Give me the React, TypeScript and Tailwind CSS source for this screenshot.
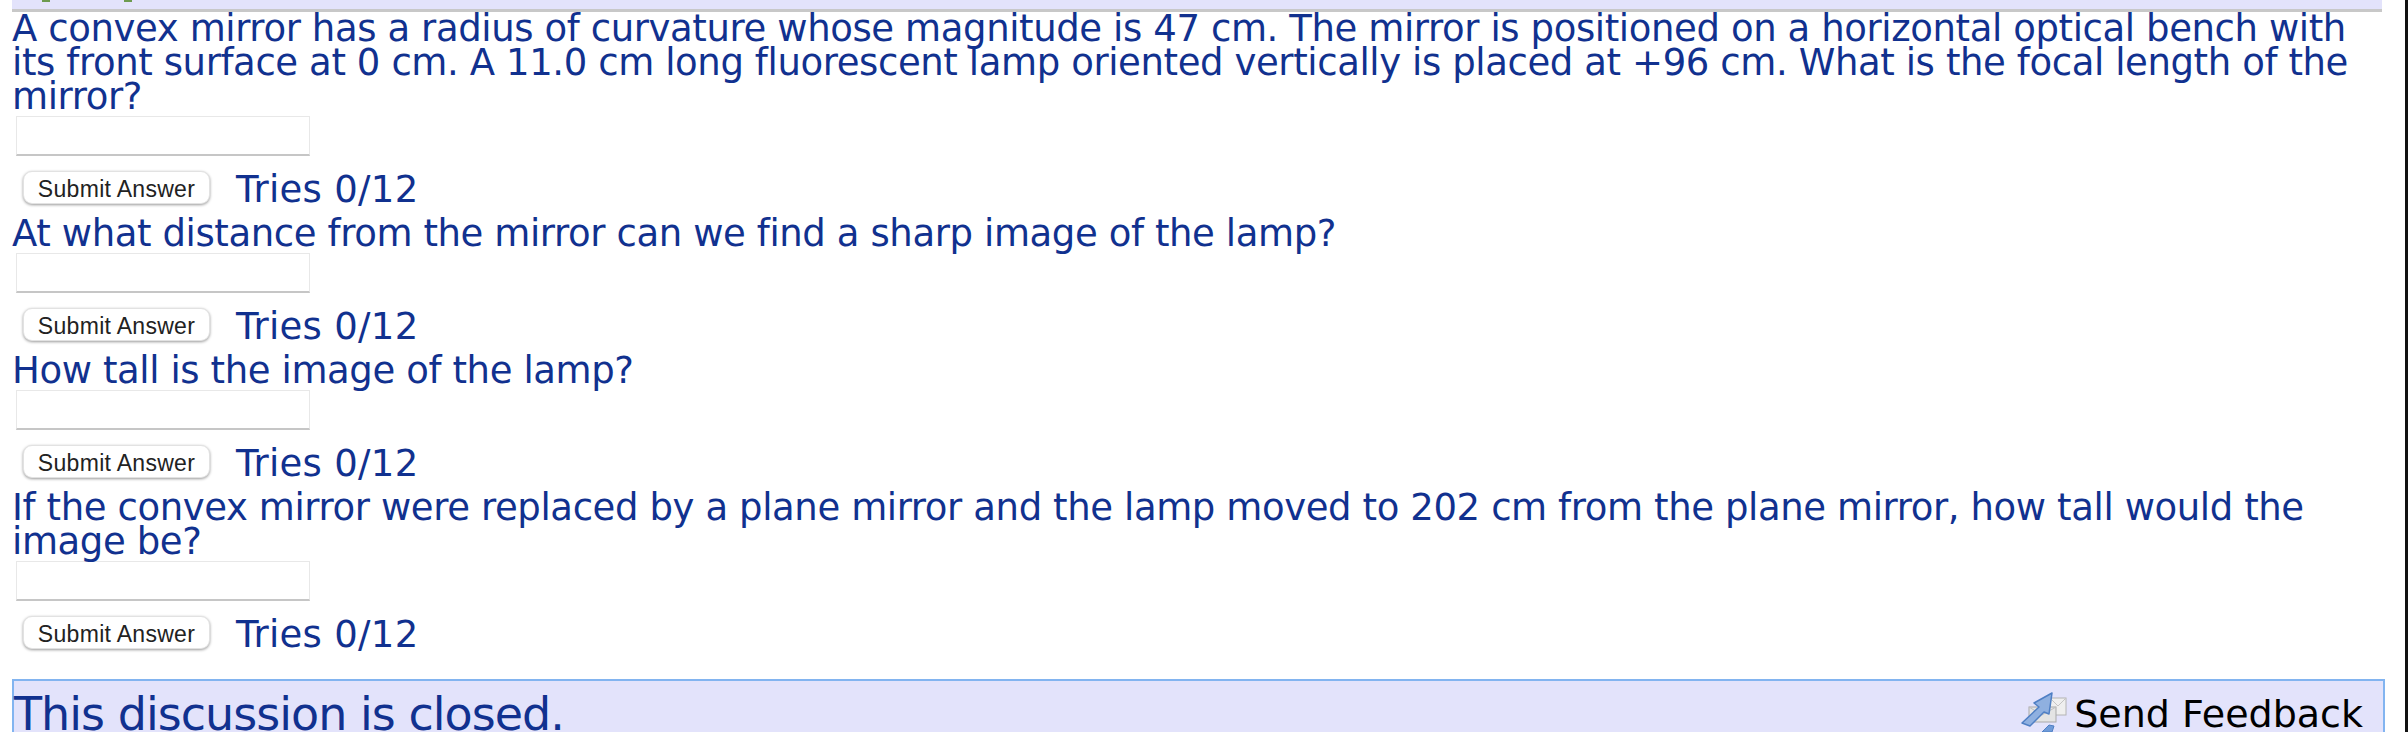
const QUESTIONS = [
  'A convex mirror has a radius of curvature whose magnitude is 47 cm. The mirror is positioned on a horizontal optical bench with its front surface at 0 cm. A 11.0 cm long fluorescent lamp oriented vertically is placed at +96 cm. What is the focal length of the mirror?',
  'At what distance from the mirror can we find a sharp image of the lamp?',
  'How tall is the image of the lamp?',
  'If the convex mirror were replaced by a plane mirror and the lamp moved to 202 cm from the plane mirror, how tall would the image be?',
];

function FeedbackIcon() {
  return (
    <svg width="48" height="42" viewBox="0 0 48 42" className="mt-[9px] mr-[7px] shrink-0">
      <path d="M23 42l7-7 5 1-2 6z" fill="#6f9bd8" stroke="#4f7fc4" />
      <rect x="31" y="8" width="16" height="17" fill="#efefef" stroke="#b4b4b4" />
      <path d="M31 8l8 8 8-8" fill="none" stroke="#c4c4c4" />
      <rect x="10" y="17" width="27" height="15" fill="#e4e4e4" stroke="#a9a9a9" />
      <path d="M10 17l13 8 14-8" fill="none" stroke="#c0c0c0" />
      <path d="M33 3L15 13l5 4L3 33l8 3 14-14 5 2z" fill="#8fb0e0" stroke="#4f7fc4" strokeWidth="1.5" strokeLinejoin="round" />
    </svg>
  );
}

export default function App() {
  return (
    <div className="flex h-[732px] w-[2408px] overflow-hidden bg-white font-['DejaVu_Sans','Liberation_Sans',sans-serif] text-[#11318f]">
      <div className="min-w-0 flex-1 pl-3 pr-5">
        {/* Header strip cut off by the top of the picture */}
        <div className="relative mr-[3px] h-3 border-b-[3px] border-[#c8c8c8] bg-[#e3e3fb]">
          <div className="absolute top-0 left-[30px] h-[2px] w-2 bg-[#6d9b50]" />
          <div className="absolute top-0 left-[112px] h-[2px] w-2 bg-[#6d9b50]" />
        </div>

        {QUESTIONS.map((q) => (
          <div key={q} className="mb-[5px]">
            <p className="pr-[10px] text-[37px] leading-[34px] tracking-[-0.39px]">{q}</p>
            <div className="mt-[2px] ml-[4px] h-[40px] w-[294px] border border-[#e8e8e8] border-b-2 border-b-[#c6c6c6] bg-white" />
            <div className="mt-[12px] flex h-[44px] items-center">
              <button className="mb-[5px] ml-[11px] h-[33px] w-[187px] rounded-[9px] border border-[#e2e2e2] bg-white font-['Liberation_Sans',sans-serif] text-[23px] tracking-[0.3px] text-[#222] shadow-[0_1px_3px_rgba(0,0,0,0.4)]">
                Submit Answer
              </button>
              <span className="ml-[26px] text-[37px] tracking-[0.3px]">Tries 0/12</span>
            </div>
          </div>
        ))}

        <div className="mt-[22px] flex h-[60px] items-start justify-between border-2 border-[#82b4f0] bg-[#e3e3fb] pr-[20px]">
          <span className="text-[46px] leading-[66px] tracking-[-0.98px]">This discussion is closed.</span>
          <span className="flex items-start text-[38px] leading-[66px] text-black">
            <FeedbackIcon />
            Send Feedback
          </span>
        </div>
      </div>
      <div className="w-[3px] bg-[#111]" />
    </div>
  );
}
